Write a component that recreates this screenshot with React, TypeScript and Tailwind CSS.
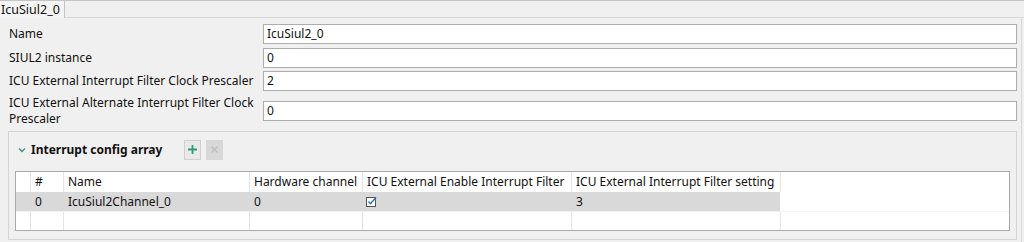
const font = { fontFamily: '"Noto Sans", "Open Sans", Arial, sans-serif' };

const fields = [
  { label: 'Name', value: 'IcuSiul2_0' },
  { label: 'SIUL2 instance', value: '0' },
  { label: 'ICU External Interrupt Filter Clock Prescaler', value: '2' },
];

const columns = [
  { title: '', w: 'w-[15px]' },
  { title: '#', w: 'w-[33px]' },
  { title: 'Name', w: 'w-[186px]' },
  { title: 'Hardware channel', w: 'w-[113px]' },
  { title: 'ICU External Enable Interrupt Filter', w: 'w-[209px]' },
  { title: 'ICU External Interrupt Filter setting', w: 'w-[209px]' },
];

function Field({ value }: { value: string }) {
  return (
    <div className="h-[20px] flex-1 border border-[#adadad] bg-white px-[3px] text-[12px] leading-[18px] text-[#111]">
      {value}
    </div>
  );
}

function CheckBox() {
  return (
    <svg width="11" height="11" viewBox="0 0 11 11">
      <rect x="0.5" y="1.5" width="9" height="9" fill="white" stroke="#555" />
      <path d="M2.5 5.5 L4.5 7.8 L10 1.5" fill="none" stroke="#2a6fc9" strokeWidth="1.4" />
    </svg>
  );
}

export default function App() {
  return (
    <div className="h-[242px] w-[1024px] overflow-hidden bg-[#f0f0f0] text-[12px] text-[#111]" style={font}>
      {/* tab bar */}
      <div className="flex h-[18px] border-t border-[#c4c4c4]">
        <div className="border-r border-[#c4c4c4] bg-[#f4f4f4] pl-[1px] pr-[4px] text-[12.5px] leading-[17px]">IcuSiul2_0</div>
        <div className="flex-1 border-b border-[#d8d8d8]" />
      </div>

      <div className="mr-[2px] border-r border-b border-[#d8d8d8] pb-[2px]">
        <div className="flex flex-col gap-[3.5px] pt-[6px] pr-[4px]">
          {fields.map((f) => (
            <div key={f.label} className="flex items-center">
              <div className="w-[263px] pl-[9px]">{f.label}</div>
              <Field value={f.value} />
            </div>
          ))}
          <div className="flex items-center">
            <div className="w-[263px] pl-[9px] pr-[4px] leading-[16px]">
              ICU External Alternate Interrupt Filter Clock Prescaler
            </div>
            <Field value="0" />
          </div>
        </div>

        {/* group */}
        <div className="ml-[8px] mr-[4px] mt-[4px] h-[109px] border border-[#d4d4d4] pt-[8px] pl-[6px]">
          <div className="flex h-[20px] items-center">
            <svg width="10" height="12" viewBox="0 0 10 12" className="ml-[2px]">
              <path d="M2 4.5 L5 7.5 L8 4.5" fill="none" stroke="#3f8f7a" strokeWidth="1.4" />
            </svg>
            <span className="ml-[4px] font-bold text-[12px]">Interrupt config array</span>
            <div className="ml-[22px] flex h-[20px] w-[17px] items-center justify-center border border-[#cfcfcf] bg-[#e9e9e9]">
              <svg width="11" height="11" viewBox="0 0 11 11">
                <path d="M5.5 1 V10 M1 5.5 H10" stroke="#2e9b7b" strokeWidth="1.8" />
              </svg>
            </div>
            <div className="ml-[5px] flex h-[20px] w-[17px] items-center justify-center bg-[#d8d8d8]">
              <svg width="9" height="9" viewBox="0 0 9 9">
                <path d="M1.5 1.5 L7.5 7.5 M7.5 1.5 L1.5 7.5" stroke="#bdbdbd" strokeWidth="1.2" />
              </svg>
            </div>
          </div>

          <div className="mt-[11px] mr-[6px] h-[60px] border border-[#a9a9a9] bg-white">
            <div className="flex h-[20px] leading-[20px]">
              {columns.map((c, i) => (
                <div key={i} className={`${c.w} border-r border-[#e4e4e4] pl-[4px]`}>{c.title}</div>
              ))}
            </div>
            <div className="flex h-[19px] leading-[19px]">
              <div className="flex w-[764px] bg-[#d9d9d9]">
                <div className="w-[15px]" />
                <div className="w-[33px] pl-[4px]">0</div>
                <div className="w-[186px] pl-[4px]">IcuSiul2Channel_0</div>
                <div className="w-[113px] pl-[4px]">0</div>
                <div className="flex w-[209px] items-center pl-[3px]"><CheckBox /></div>
                <div className="w-[208px] pl-[4px]">3</div>
              </div>
            </div>
            <div className="flex h-[19px] border-t border-[#f2f2f2]">
              {columns.map((c, i) => (
                <div key={i} className={`${c.w} border-r border-[#e4e4e4]`} />
              ))}
            </div>
          </div>
        </div>
      </div>
    </div>
  );
}
